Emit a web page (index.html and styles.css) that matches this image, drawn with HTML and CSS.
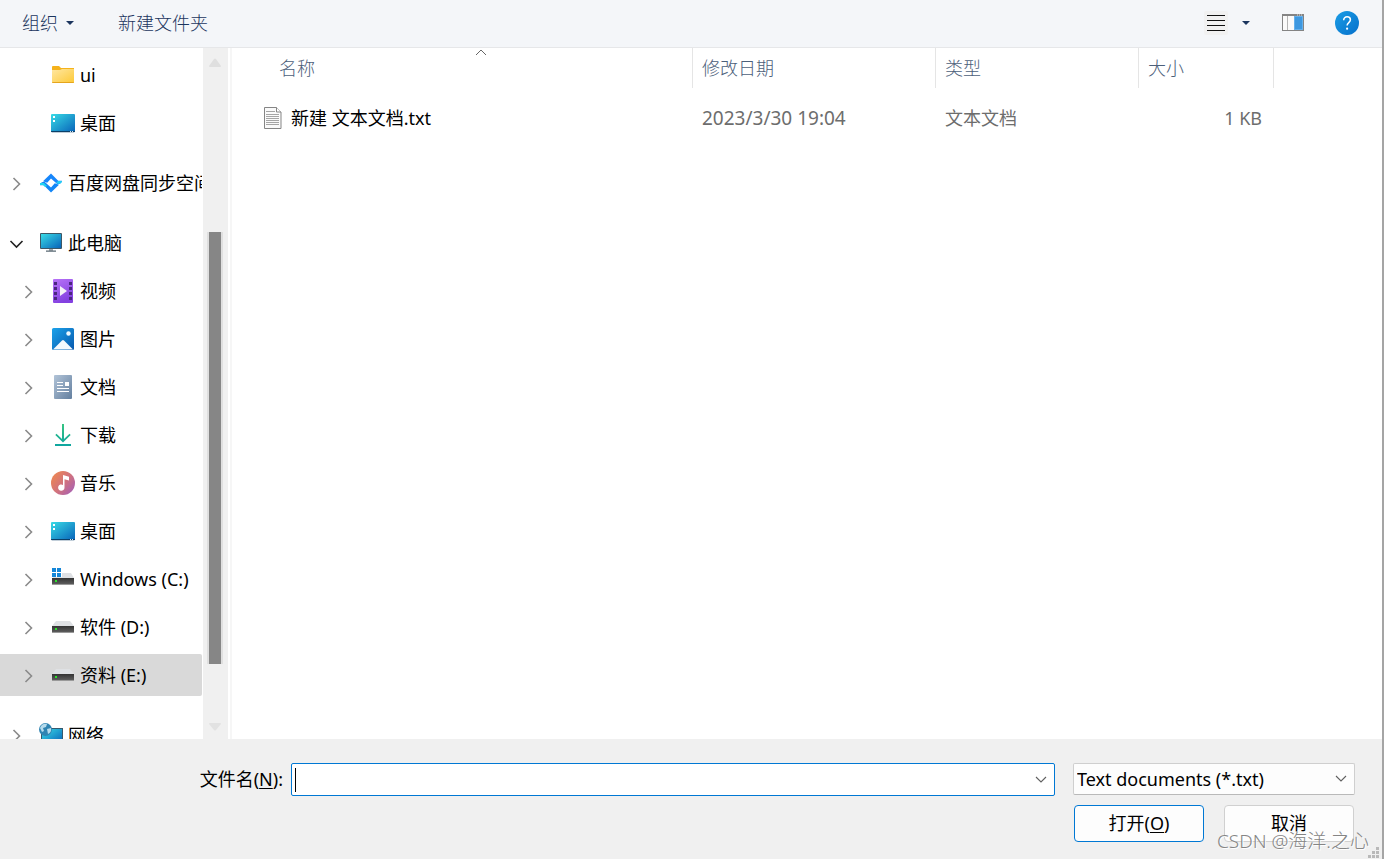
FILE: index.html
```html
<!DOCTYPE html>
<html lang="zh-CN">
<head>
<meta charset="utf-8">
<title>打开</title>
<link rel="stylesheet" href="styles.css">
</head>
<body>
<svg class="defs" aria-hidden="true">
  <defs>
    <linearGradient id="g-folder" x1="0" y1="0" x2="1" y2="1"><stop offset="0" stop-color="#ffe7a2"/><stop offset="1" stop-color="#fdc936"/></linearGradient>
    <linearGradient id="g-screen" x1="0" y1="0" x2="1" y2="1"><stop offset="0" stop-color="#38dbe6"/><stop offset="1" stop-color="#0863b9"/></linearGradient>
    <linearGradient id="g-video" x1="0" y1="0" x2="0.4" y2="1"><stop offset="0" stop-color="#b873f7"/><stop offset="1" stop-color="#8340e0"/></linearGradient>
    <linearGradient id="g-picture" x1="0" y1="0" x2="1" y2="1"><stop offset="0" stop-color="#1ca2ea"/><stop offset="1" stop-color="#0758ad"/></linearGradient>
    <linearGradient id="g-doc" x1="0" y1="0" x2="1" y2="1"><stop offset="0" stop-color="#b2c4d8"/><stop offset="1" stop-color="#637f9f"/></linearGradient>
    <linearGradient id="g-down" x1="0" y1="0" x2="0" y2="1"><stop offset="0" stop-color="#35c481"/><stop offset="1" stop-color="#0ea5a0"/></linearGradient>
    <linearGradient id="g-music" x1="0" y1="0.1" x2="1" y2="0.9"><stop offset="0" stop-color="#f0894e"/><stop offset="0.55" stop-color="#cf7180"/><stop offset="1" stop-color="#a35fb9"/></linearGradient>
    <linearGradient id="g-drive" x1="0" y1="0" x2="0" y2="1"><stop offset="0" stop-color="#333"/><stop offset="1" stop-color="#5c5c5c"/></linearGradient>
    <symbol id="i-desktop" viewBox="0 0 24 24"><rect y="3" width="24" height="18" rx="1" fill="url(#g-screen)"/><path d="M0 20h24v0.3a1 1 0 0 1-1 0.9H1a1 1 0 0 1-1-0.9z" fill="#0b3f68"/><path d="M2 5h2v2H2zM2 9h2v2H2z" fill="#fff"/><path d="M19 20h1v1h-1zM21 20h1v1h-1z" fill="#d0e6f5"/></symbol>
    <symbol id="i-drive" viewBox="0 0 24 24"><path d="M5 6h14l4 5H1z" fill="#dfe1e4"/><rect x="1" y="11" width="22" height="7" fill="#999"/><rect x="1" y="11" width="22" height="6" fill="url(#g-drive)"/><rect x="4" y="13" width="2" height="2" fill="#2be32b"/></symbol>
    <symbol id="i-right" viewBox="0 0 10 16"><path d="M1.5 3l6 6-6 6" fill="none" stroke="#8a8a8a" stroke-width="1.6"/></symbol>
    <symbol id="i-chevron" viewBox="0 0 14 10"><path d="M2 2l5 5 5-5" fill="none" stroke="#606060" stroke-width="1.1"/></symbol>
  </defs>
</svg>
<div class="dialog">
  <header class="toolbar">
    <button class="tool" type="button">组织 <svg class="caret" viewBox="0 0 8 4"><path d="M0 0h8L4 4z" fill="#1b355e"/></svg></button>
    <button class="tool" type="button">新建文件夹</button>
    <span class="spacer"></span>
    <button class="tool view" type="button" aria-label="更改视图"><svg width="24" height="24" viewBox="0 0 24 24"><rect width="24" height="24" rx="2" fill="#f1f1f1"/><path d="M3 4.5h18M3 9.5h18M3 14.5h18M3 19.5h18" stroke="#111"/></svg></button>
    <button class="tool more" type="button" aria-label="更多选项"><svg class="caret" viewBox="0 0 8 4"><path d="M0 0h8L4 4z" fill="#1b355e"/></svg></button>
    <button class="tool pane" type="button" aria-label="预览窗格"><svg width="22" height="18" viewBox="0 0 22 18"><rect x="0.5" y="0.5" width="21" height="16" fill="#fafafa" stroke="#848484"/><path d="M0 0h22v2H0z" fill="#848484"/><path d="M15 1h1M17 1h1M19 1h1" stroke="#ddd"/><path d="M5.5 2v14" stroke="#b5b5b5"/><rect x="12" y="2" width="9" height="14" fill="#64b0ec"/><rect x="13" y="3" width="7" height="12" fill="#3d98e0"/></svg></button>
    <button class="tool help" type="button" aria-label="帮助"><svg width="24" height="24" viewBox="0 0 24 24"><defs><linearGradient id="g-help" x1="0" y1="0" x2="1" y2="1"><stop offset="0" stop-color="#1b9de5"/><stop offset="1" stop-color="#0570cb"/></linearGradient></defs><circle cx="12" cy="12" r="12" fill="url(#g-help)"/><path d="M8.700 9.200c0-2.100 1.400-3.400 3.400-3.400s3.300 1.200 3.300 3c0 2.800-3.300 2.800-3.300 5.700" fill="none" stroke="#fff" stroke-width="1.500"/><circle cx="12.100" cy="17.700" r="1.100" fill="#fff"/></svg></button>
  </header>

  <div class="body">
    <nav class="tree" aria-label="导航窗格">
      <ul>
        <li class="row child"><span class="twist"></span><svg class="icon" viewBox="0 0 24 24"><path d="M1 4a1 1 0 0 1 1-1h6l2 2h13v13H1z" fill="#f5b21b"/><path d="M1 7h8l2-1h12v13a1 1 0 0 1-1 1H2a1 1 0 0 1-1-1z" fill="url(#g-folder)"/><path d="M1 19h22a1 1 0 0 1-1 1H2a1 1 0 0 1-1-1z" fill="#e5a51d"/></svg><span>ui</span></li>
        <li class="row child"><span class="twist"></span><svg class="icon"><use href="#i-desktop"/></svg><span>桌面</span></li>
        <li class="row root"><svg class="twist"><use href="#i-right"/></svg><svg class="icon" viewBox="0 0 24 24"><path d="M12 2.500l7.200 7.300H23c-.4 2.400-2 3.400-4.500 3.400L12 7.600l-3.800 4.200-4.200-1.600z" fill="#1786fb"/><path d="M12 21.500l-7.200-7.300H1c.4-2.400 2-3.400 4.500-3.400L12 16.400l3.800-4.200 4.200 1.600z" fill="#1286f7"/><path d="M1 12h4l3 3-2 1-2-2H1z" fill="#22d3ef"/><path d="M19 10h4c-.3 1.500-1 2.600-3 3l-3-1z" fill="#22cdf5"/></svg><span>百度网盘同步空间</span></li>
        <li class="row root"><svg class="twist" viewBox="0 0 10 16"><path d="M-1.500 6l6 6 6-6" fill="none" stroke="#222" stroke-width="1.600"/></svg><svg class="icon" viewBox="0 0 24 24"><rect x="1" y="2" width="22" height="16" rx="1" fill="#3d5766"/><rect x="2" y="3" width="20" height="14" fill="url(#g-screen)"/><path d="M10 18h4v2h-4z" fill="#a2a9ae"/><path d="M7 19.500h10v1.200H7z" fill="#596873"/></svg><span>此电脑</span></li>
        <li class="row child"><svg class="twist"><use href="#i-right"/></svg><svg class="icon" viewBox="0 0 24 24"><rect x="2" width="20" height="24" rx="1" fill="url(#g-video)"/><path d="M3 3h3v3H3zM3 8h3v3H3zM3 13h3v3H3zM3 18h3v3H3zM18 3h3v3h-3zM18 8h3v3h-3zM18 13h3v3h-3zM18 18h3v3h-3z" fill="#4b2780"/><path d="M9 7l7 5-7 5z" fill="#f3f0f6"/></svg><span>视频</span></li>
        <li class="row child"><svg class="twist"><use href="#i-right"/></svg><svg class="icon" viewBox="0 0 24 24"><rect x="1" y="1" width="22" height="22" rx="1.500" fill="url(#g-picture)"/><path d="M2 22.500L11 13.500q1-1 2 0l9 9z" fill="#f4f9fd"/><circle cx="17.500" cy="6.500" r="2.200" fill="#eef8ff"/></svg><span>图片</span></li>
        <li class="row child"><svg class="twist"><use href="#i-right"/></svg><svg class="icon" viewBox="0 0 24 24"><rect x="3" width="18" height="24" rx="1" fill="url(#g-doc)"/><path d="M6 7.500h6M6 10.500h6M6 13.500h12M6 16.500h12" stroke="#fff" stroke-width="1.200"/><rect x="14" y="7" width="4" height="4" fill="#fff"/></svg><span>文档</span></li>
        <li class="row child"><svg class="twist"><use href="#i-right"/></svg><svg class="icon" viewBox="0 0 24 24"><path d="M11 1h2v15l5.500-5.300 1.200 1.400L12 19.500l-7.700-7.400 1.200-1.400L11 16zM4 21h16v2H4z" fill="url(#g-down)"/></svg><span>下载</span></li>
        <li class="row child"><svg class="twist"><use href="#i-right"/></svg><svg class="icon" viewBox="0 0 24 24"><circle cx="12" cy="12" r="12" fill="url(#g-music)"/><path d="M12 4l6 1.800v3.700L13.500 8.300v8.200a3.200 3.200 0 1 1-1.500-2.600z" fill="#fff"/></svg><span>音乐</span></li>
        <li class="row child"><svg class="twist"><use href="#i-right"/></svg><svg class="icon"><use href="#i-desktop"/></svg><span>桌面</span></li>
        <li class="row child"><svg class="twist"><use href="#i-right"/></svg><svg class="icon" viewBox="0 0 24 24"><path d="M9 6h11l3 5H1z" fill="#dfe1e4"/><rect x="1" y="11" width="22" height="7" fill="#999"/><rect x="1" y="11" width="22" height="6" fill="url(#g-drive)"/><rect x="4" y="13" width="2" height="2" fill="#2be32b"/><path d="M0 0h11v10H0z" fill="#fff"/><path d="M1 1h4v4H1zM6 1h4v4H6zM1 6h4v4H1zM6 6h4v4H6z" fill="#1486d8"/></svg><span>Windows (C:)</span></li>
        <li class="row child"><svg class="twist"><use href="#i-right"/></svg><svg class="icon"><use href="#i-drive"/></svg><span>软件 (D:)</span></li>
        <li class="row child selected"><svg class="twist"><use href="#i-right"/></svg><svg class="icon"><use href="#i-drive"/></svg><span>资料 (E:)</span></li>
        <li class="row root"><svg class="twist"><use href="#i-right"/></svg><svg class="icon" viewBox="0 0 24 24"><rect x="2" y="5" width="22" height="16" fill="#36586c"/><rect x="3" y="6" width="20" height="14" fill="url(#g-screen)"/><circle cx="6.500" cy="6.500" r="6.500" fill="#2f84b2"/><path d="M1 5c1-4 5-5 7-4l-1 3-3 1 1 3-2 1zM8 6l4-1c.5 3-.5 5-3 6z" fill="#b6dbec"/></svg><span>网络</span></li>
      </ul>
    </nav>
    <div class="scrollbar" aria-hidden="true">
      <svg width="12" height="10" viewBox="0 0 12 10"><path d="M5 1q1-1 2 0l5 7q0 1-1 1H1q-1 0-1-1z" fill="#dfdfdf"/></svg>
      <div class="track"><div class="thumb"></div></div>
      <svg width="12" height="8" viewBox="0 0 12 8"><path d="M1 0h10q1 0 1 1L7 7q-1 1-2 0L0 1q0-1 1-1z" fill="#e2e2e2"/></svg>
    </div>
    <main class="files">
      <table>
        <colgroup><col class="c-name"><col class="c-date"><col class="c-type"><col class="c-size"><col></colgroup>
        <thead><tr><th>名称<svg class="sort" viewBox="0 0 12 7"><path d="M1 6l5-5 5 5" fill="none" stroke="#666"/></svg></th><th>修改日期</th><th>类型</th><th>大小</th><td></td></tr></thead>
        <tbody><tr>
          <td><span class="file"><svg width="18" height="22" viewBox="0 0 18 22"><path d="M0.500 0.500h12l4.500 4.500v16.500H0.500z" fill="#fafafa" stroke="#858585"/><path d="M12.500 0.500v4.500H17" fill="#fff" stroke="#858585"/><path d="M2 4.500h9M2 7.500h13M2 9.500h13M2 11.500h13M2 13.500h13M2 15.500h13M2 17.500h13" stroke="#a5a5a5"/></svg><span>新建 文本文档.txt</span></span></td>
          <td class="date">2023/3/30 19:04</td><td>文本文档</td><td class="size">1 KB</td><td></td>
        </tr></tbody>
      </table>
    </main>
  </div>

  <footer class="footer">
    <div class="line">
      <label for="filename">文件名(<u>N</u>):</label>
      <div class="combo"><span class="cursor"></span><input id="filename" type="text"><button type="button" aria-label="历史文件名"><svg width="14" height="10"><use href="#i-chevron"/></svg></button></div>
      <div class="filter"><select aria-label="文件类型"><option>Text documents (*.txt)</option></select><svg width="14" height="10"><use href="#i-chevron"/></svg></div>
    </div>
    <div class="actions">
      <button class="btn primary" type="button">打开(<u>O</u>)</button>
      <button class="btn" type="button">取消</button>
    </div>
  </footer>
  <span class="watermark">CSDN @海洋.之心</span>
  <svg class="grip" width="12" height="12" viewBox="0 0 12 12"><path d="M8 0h3v3H8zM4 4h3v3H4zM8 4h3v3H8zM0 8h3v3H0zM4 8h3v3H4zM8 8h3v3H8z" fill="#b9b9b9"/></svg>
</div>
</body>
</html>
```
FILE: styles.css
```css
* { box-sizing: border-box; }
body {
  margin: 0;
  font: 18px/24px "Noto Sans", "Noto Sans CJK SC", sans-serif;
  color: #000;
}
button, input, select { font: inherit; color: inherit; margin: 0; }
.defs { position: absolute; width: 0; height: 0; }
.dialog {
  position: relative;
  display: flex;
  flex-direction: column;
  height: 100vh;
  overflow: hidden;
  background: #fff;
  border-right: 2px solid #a5a5a5;
}

.toolbar {
  display: flex;
  align-items: center;
  flex: none;
  height: 48px;
  padding: 0 23px 2px 22px;
  background: #f4f6f9;
  border-bottom: 1px solid #e6e7e9;
}
.tool {
  display: flex;
  align-items: center;
  gap: 8px;
  padding: 0;
  border: 0;
  background: none;
  color: #1b355e;
  font-weight: 300;
}
.tool + .tool { margin-left: 44px; }
.tool.more { margin-left: 14px; }
.tool.pane { margin-left: 32px; }
.tool.help { margin-left: 31px; }
.caret { width: 8px; height: 4px; }
.spacer { flex: 1; }

.body { display: flex; flex: 1; min-height: 0; }
.tree { width: 203px; overflow: hidden; flex: none; }
.tree ul {
  display: flex;
  flex-direction: column;
  gap: 6px;
  margin: 0;
  padding: 6px 1px 0 0;
  list-style: none;
}
.row {
  display: flex;
  align-items: center;
  flex: none;
  height: 42px;
  overflow: hidden;
  white-space: nowrap;
  border-radius: 0 2px 2px 0;
}
.row.root { padding-left: 12px; margin-top: 12px; }
.row.child { padding-left: 24px; }
.row.selected { background: #d9d9d9; }
.twist { width: 10px; height: 16px; margin-right: 17px; flex: none; overflow: visible; }
.icon { width: 24px; height: 24px; margin-right: 5px; flex: none; }

.scrollbar {
  display: flex;
  flex-direction: column;
  align-items: center;
  flex: none;
  width: 25px;
  padding: 10px 1px 8px 0;
  background: #f0f0f0;
}
.track { flex: 1; width: 16px; padding-top: 164px; }
.thumb {
  height: 432px;
  max-height: 100%;
  background: #868686;
  border: solid #dfdfdf;
  border-width: 0 2px;
}

.files { flex: 1; min-width: 0; margin-left: 2px; border-left: 2px solid #f6f6f6; }
.files table { width: 100%; table-layout: fixed; border-collapse: separate; border-spacing: 0; }
.c-name { width: 461px; }
.c-date { width: 243px; }
.c-type { width: 203px; }
.c-size { width: 135px; }
.files th {
  position: relative;
  height: 40px;
  padding: 0 9px;
  font-weight: 300;
  text-align: left;
  color: #4c607a;
  border-right: 1px solid #e5e5e5;
}
.files th:first-child { padding-left: 47px; }
.files tbody td { height: 60px; padding: 0 9px; color: #6d6d6d; }
.files tbody td:first-child { padding-left: 32px; color: #000; }
.files tbody .date { font-size: 19px; }
.files tbody .size { padding-right: 12px; text-align: right; }
.file { display: flex; align-items: center; gap: 9px; }
.sort { position: absolute; top: 1px; left: 243px; width: 12px; height: 7px; }

.footer { flex: none; padding: 24px 27px 17px 24px; background: #f0f0f0; }
.line { display: flex; align-items: flex-start; }
.line label { width: 259px; margin-right: 8px; line-height: 32px; text-align: right; }
.combo {
  display: flex;
  align-items: center;
  flex: 1;
  height: 33px;
  min-width: 0;
  padding-left: 3px;
  background: #fff;
  border: 1px solid #0078d4;
  border-radius: 2px;
}
.cursor { width: 1px; height: 24px; background: #000; }
.combo input { flex: 1; min-width: 0; height: 28px; padding: 0; border: 0; outline: 0; background: none; }
.combo button { display: flex; padding: 0 6px; border: 0; background: none; }
.filter { position: relative; width: 282px; height: 32px; margin-left: 18px; }
.filter select {
  width: 100%;
  height: 100%;
  padding: 0 28px 0 3px;
  appearance: none;
  background: #fdfdfd;
  border: 1px solid #cfcfcf;
  border-bottom-color: #b9b9b9;
  border-radius: 2px;
}
.filter svg { position: absolute; right: 7px; top: 11px; pointer-events: none; }
.actions { display: flex; justify-content: flex-end; gap: 20px; margin-top: 9px; padding-right: 1px; }
.btn {
  width: 130px;
  height: 37px;
  padding: 0 0 2px;
  background: #fdfdfd;
  border: 1px solid #d0d0d0;
  border-radius: 4px;
}
.btn.primary { border-color: #0078d4; }
u { text-underline-offset: 2px; text-decoration-thickness: 1px; }
.watermark {
  position: absolute;
  right: 13px;
  bottom: 6px;
  font-size: 19px;
  font-weight: 300;
  color: #858585;
  text-shadow: 1px 1px 0 #fff;
  pointer-events: none;
}
.grip { position: absolute; right: 2px; bottom: 0; }
```
